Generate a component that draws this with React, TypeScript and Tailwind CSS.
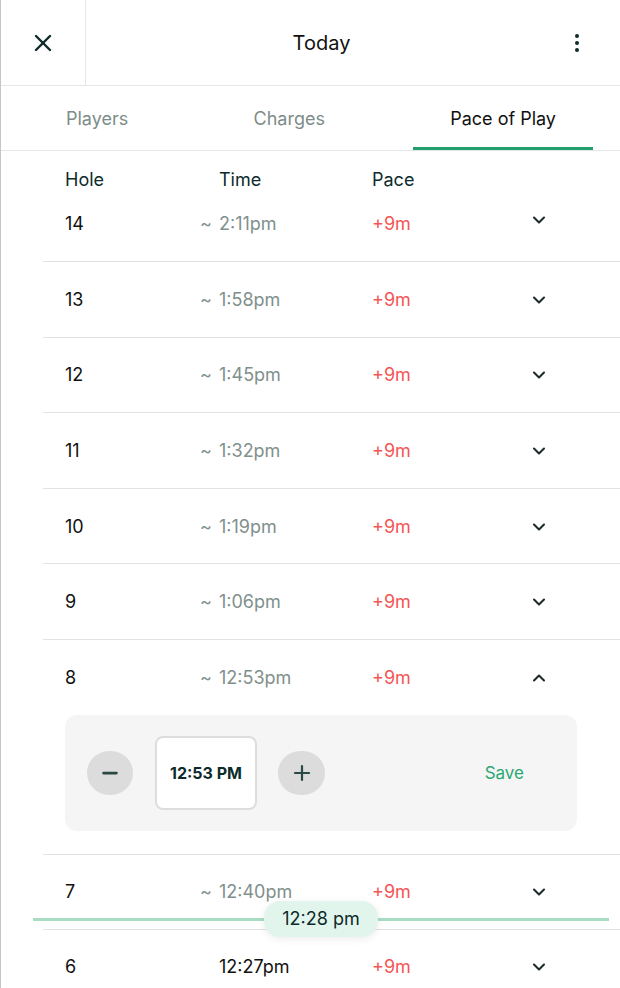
import React from 'react';
import { X, EllipsisVertical, ChevronDown, ChevronUp, Minus, Plus } from 'lucide-react';

type Hole = { hole: number; time: string; pace: string; estimate: boolean };

const holes: Hole[] = [
  { hole: 13, time: '1:58pm', pace: '+9m', estimate: true },
  { hole: 12, time: '1:45pm', pace: '+9m', estimate: true },
  { hole: 11, time: '1:32pm', pace: '+9m', estimate: true },
  { hole: 10, time: '1:19pm', pace: '+9m', estimate: true },
  { hole: 9, time: '1:06pm', pace: '+9m', estimate: true },
];

const Cells: React.FC<{ row: Hole; open?: boolean }> = ({ row, open }) => (
  <>
    <div className="w-[135px] text-[#111111]">{row.hole}</div>
    <div className="w-[172px] flex">
      <span className="w-[19px] text-[#80908d]">{row.estimate ? '~' : ''}</span>
      <span className={row.estimate ? 'text-[#80908d]' : 'text-[#111111]'}>{row.time}</span>
    </div>
    <div className="w-[157px] text-[#f45656]">{row.pace}</div>
    <div className="w-[20px] flex items-center justify-center text-[#1f2a2a]">
      {open ? <ChevronUp size={20} strokeWidth={2.5} /> : <ChevronDown size={20} strokeWidth={2.5} />}
    </div>
  </>
);

const App: React.FC = () => {
  const tabs = ['Players', 'Charges', 'Pace of Play'];
  const active = 2;

  return (
    <div
      className="w-[620px] h-[988px] overflow-hidden bg-white border-l border-[#c4c4c4] text-[18px] leading-[28px]"
      style={{ fontFamily: 'Inter, "Noto Sans", sans-serif' }}
    >
      {/* top bar */}
      <header className="flex h-[86px] border-b border-[#e6e6e6]">
        <button className="w-[85px] flex items-center justify-center border-r border-[#e6e6e6] text-[#0d2b2b]">
          <X size={28} strokeWidth={2.1} />
        </button>
        <div className="flex-1 flex items-center justify-center text-[20px] text-[#111111]">Today</div>
        <button className="w-[40px] mr-[23px] flex items-center justify-center text-[#0d2b2b]">
          <EllipsisVertical size={24} strokeWidth={2} />
        </button>
      </header>

      {/* tabs */}
      <nav className="flex justify-between h-[65px] pl-[28px] pr-[27px] border-b border-[#e6e6e6]">
        {tabs.map((t, i) => (
          <div
            key={t}
            className={
              i === active
                ? 'h-full flex items-center px-[37px] pt-[5px] border-b-[3px] border-[#22a06b] text-[#111111]'
                : 'h-full flex items-center px-[37px] pt-[5px] border-b-[3px] border-transparent text-[#7d8c89]'
            }
          >
            {t}
          </div>
        ))}
      </nav>

      {/* column header */}
      <div className="flex pl-[64px] pt-[15px] text-[#0d2b2b]">
        <div className="w-[154px]">Hole</div>
        <div className="w-[153px]">Time</div>
        <div>Pace</div>
      </div>

      <div className="ml-[42px]">
        <div className="flex items-start h-[68px] pt-[16px] pl-[22px] border-b border-[#e2e2e2]">
          <Cells row={{ hole: 14, time: '2:11pm', pace: '+9m', estimate: true }} />
        </div>

        {holes.map((h) => (
          <div key={h.hole} className="flex items-center h-[75.6px] pt-[1px] pl-[22px] border-b border-[#e2e2e2]">
            <Cells row={h} />
          </div>
        ))}

        {/* expanded hole 8 */}
        <div className="border-b border-[#e2e2e2] pb-[23px]">
          <div className="flex items-center h-[75px] pt-[1px] pl-[22px]">
            <Cells row={{ hole: 8, time: '12:53pm', pace: '+9m', estimate: true }} open />
          </div>
          <div className="ml-[22px] w-[512px] h-[116px] rounded-xl bg-[#f5f5f5] flex items-center pl-[22px] pr-[53px]">
            <button className="w-[46px] h-[44px] rounded-full bg-[#dcdcdc] flex items-center justify-center text-[#2a4844]">
              <Minus size={22} strokeWidth={3} />
            </button>
            <div className="ml-[22px] w-[102px] h-[74px] rounded-lg border-2 border-[#dddddd] bg-white flex items-center justify-center text-[16px] font-bold text-[#0d2b2b]">
              12:53 PM
            </div>
            <button className="ml-[21px] w-[47px] h-[44px] rounded-full bg-[#dcdcdc] flex items-center justify-center text-[#2a4844]">
              <Plus size={24} strokeWidth={2.2} />
            </button>
            <div className="flex-1" />
            <button className="text-[17px] text-[#2aa774]">Save</button>
          </div>
        </div>

        {/* hole 7 with current time marker */}
        <div className="relative flex items-center h-[75px] pl-[22px] border-b border-[#e2e2e2]">
          <Cells row={{ hole: 7, time: '12:40pm', pace: '+9m', estimate: true }} />
          <div className="absolute left-[-10px] right-[11px] top-[63px] h-[3px] bg-[#a8dcc3]">
            <div className="absolute left-1/2 top-1/2 -translate-x-1/2 -translate-y-1/2 w-[114px] h-[36px] rounded-2xl bg-[#e2f5ed] shadow-[0_2px_8px_rgba(0,0,0,0.08)] flex items-center justify-center text-[#0d2b2b]">
              12:28 pm
            </div>
          </div>
        </div>

        <div className="flex items-center h-[75px] pt-[1px] pl-[22px] border-b border-[#e2e2e2]">
          <Cells row={{ hole: 6, time: '12:27pm', pace: '+9m', estimate: false }} />
        </div>
      </div>
    </div>
  );
};

export default App;
